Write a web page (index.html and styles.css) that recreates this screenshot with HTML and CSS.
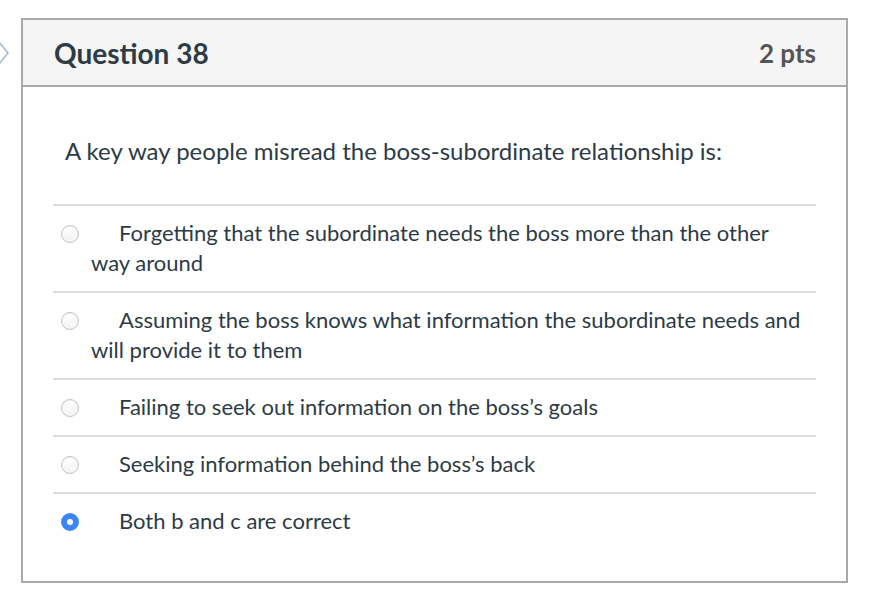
FILE: index.html
```html
<!DOCTYPE html>
<html lang="en">
<head>
<meta charset="utf-8">
<title>Question 38</title>
<link rel="stylesheet" href="styles.css">
</head>
<body>
<div class="page">
  <div class="nav-edge">
    <svg class="chevron" width="10" height="26" viewBox="0 0 10 26" aria-hidden="true">
      <polyline points="-1,2 8,13 -1,24" fill="none" stroke="#a9bccb" stroke-width="1.6"/>
    </svg>
  </div>
  <div class="question">
    <div class="q-header">
      <h2 class="q-title">Question 38</h2>
      <span class="q-points">2 pts</span>
    </div>
    <div class="q-body">
      <p class="q-text">A key way people misread the boss-subordinate relationship is:</p>
      <div class="answers">
        <div class="answer">
          <div class="answer-label"><span class="radio"></span>Forgetting that the subordinate needs the boss more than the other way around</div>
        </div>
        <div class="answer">
          <div class="answer-label"><span class="radio"></span>Assuming the boss knows what information the subordinate needs and will provide it to them</div>
        </div>
        <div class="answer">
          <div class="answer-label"><span class="radio"></span>Failing to seek out information on the boss’s goals</div>
        </div>
        <div class="answer">
          <div class="answer-label"><span class="radio"></span>Seeking information behind the boss’s back</div>
        </div>
        <div class="answer">
          <div class="answer-label"><span class="radio checked"></span>Both b and c are correct</div>
        </div>
      </div>
    </div>
  </div>
</div>
</body>
</html>
```

FILE: styles.css
```css
html, body {
  margin: 0;
  padding: 0;
  background: #ffffff;
}

body {
  font-family: Lato, "Open Sans", "Liberation Sans", sans-serif;
  color: #2d3b45;
}

.page {
  display: flex;
  align-items: flex-start;
  gap: 11px;
  padding-top: 18px;
}

.nav-edge {
  width: 10px;
  padding-top: 22px;
}

.chevron {
  display: block;
}

.question {
  width: 823px;
  border: 2px solid #a9a9a9;
  background: #ffffff;
}

.q-header {
  display: flex;
  align-items: center;
  justify-content: space-between;
  height: 65px;
  padding: 0 30px 0 31px;
  background: #f5f5f5;
  border-bottom: 2px solid #a9a9a9;
}

.q-title {
  margin: 0;
  font-size: 28px;
  font-weight: 700;
  color: #2d3b45;
}

.q-points {
  font-size: 26px;
  font-weight: 700;
  color: #555555;
}

.q-body {
  padding: 49px 30px 32px 30px;
}

.q-text {
  margin: 0 0 38px 12px;
  font-size: 24px;
  line-height: 30px;
}

.answers {
  font-size: 22px;
  line-height: 30px;
}

.answer {
  border-top: 2px solid #dddddd;
  padding: 12px 0 13px 38px;
}

.answer-label {
  padding-right: 10px;
}

.radio {
  float: left;
  width: 16px;
  height: 16px;
  margin: 7px 40px 0 -30px;
  border: 1px solid #c4c4c4;
  border-radius: 50%;
  background: linear-gradient(#ffffff, #f3f3f3);
  box-shadow: inset 0 1px 1px rgba(0, 0, 0, 0.06);
}

.radio.checked {
  width: 6px;
  height: 6px;
  border: 6px solid #3b86f7;
  background: #ffffff;
  box-shadow: none;
}
```
